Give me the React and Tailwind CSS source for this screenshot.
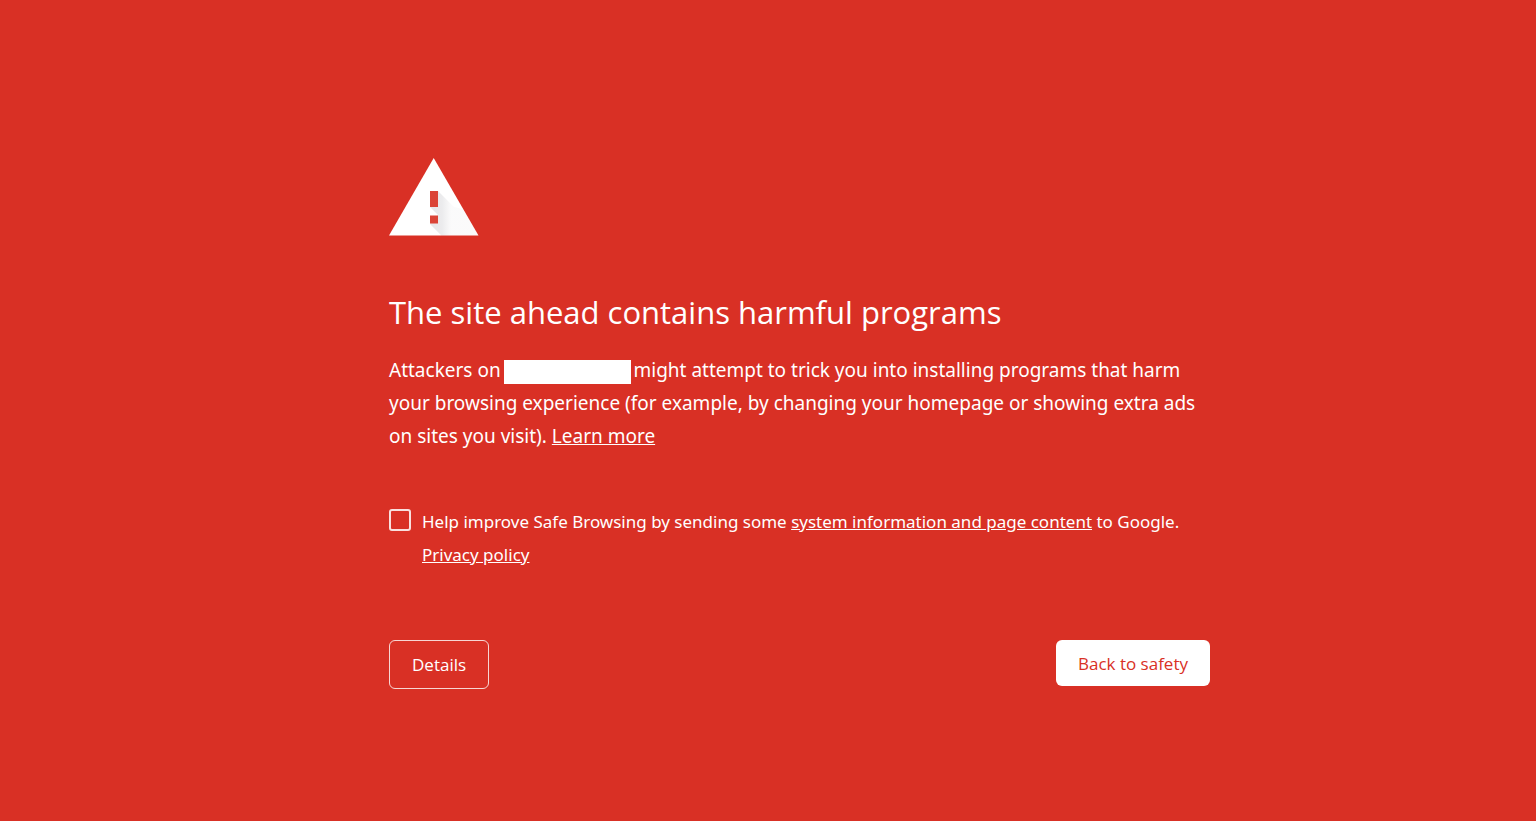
import React from "react";

function WarningIcon() {
  return (
    <svg className="block h-[78px] w-[90px]" viewBox="0 0 90 78" aria-hidden="true">
      <defs>
        <linearGradient id="shade" gradientUnits="userSpaceOnUse" x1="44" y1="0" x2="62" y2="0">
          <stop offset="0" stopColor="#262338" stopOpacity=".11" />
          <stop offset=".5" stopColor="#262338" stopOpacity=".09" />
          <stop offset="1" stopColor="#262338" stopOpacity=".02" />
        </linearGradient>
      </defs>
      <path d="M44.7 0L89.5 77.4H0z" fill="#fff" />
      <path d="M49 33L65 49L74 51L89.5 77.4H52.4L41 66L49 57L41 49z" fill="url(#shade)" />
      <path d="M41 33h8v16h-8zM41 57.5h8v8h-8z" fill="#db4437" />
    </svg>
  );
}

function App() {
  return (
    <main className="min-h-screen bg-[#d93025] pt-[158px] pb-12 font-['Open_Sans',sans-serif] text-white">
      <div className="mx-auto max-w-[884px] pl-[63px]">
        <WarningIcon />
        <h1 className="mt-14 text-[31px] leading-10">The site ahead contains harmful programs</h1>
        <p className="mt-[22px] font-['Noto_Sans',sans-serif] text-[19px] leading-[33px]">
          Attackers on <span className="-mx-0.5 inline-block h-6 w-[127px] bg-white align-middle" /> might attempt to trick you into installing programs that harm your browsing experience (for example, by changing your homepage or showing extra ads on sites you visit).{" "}
          <a href="#learn" className="underline">Learn more</a>
        </p>
        <div className="mt-[52px] flex items-start gap-[11px]">
          <input
            id="reporting"
            type="checkbox"
            className="mt-1 size-[22px] shrink-0 appearance-none rounded-[3px] border-2 border-white/85"
          />
          <label htmlFor="reporting" className="font-['Noto_Sans',sans-serif] text-[17px] leading-[33px]">
            Help improve Safe Browsing by sending some <a href="#info" className="underline">system information and page content</a> to Google.
            <br />
            <a href="#privacy" className="underline">Privacy policy</a>
          </label>
        </div>
        <div className="mt-[69px] flex items-start justify-between">
          <button className="rounded-md border border-white/80 px-[22px] pt-3 pb-[11px] text-[17px] leading-6">Details</button>
          <button className="rounded-md bg-white px-[22px] pt-3 pb-2.5 text-[17px] leading-6 text-[#d93025]">Back to safety</button>
        </div>
      </div>
    </main>
  );
}

export default App;
